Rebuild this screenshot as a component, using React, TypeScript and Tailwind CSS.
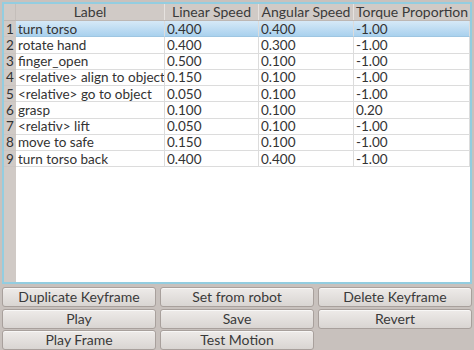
const rows = [
  ['turn torso', '0.400', '0.400', '-1.00'],
  ['rotate hand', '0.400', '0.300', '-1.00'],
  ['finger_open', '0.500', '0.100', '-1.00'],
  ['<relative> align to object', '0.150', '0.100', '-1.00'],
  ['<relative> go to object', '0.050', '0.100', '-1.00'],
  ['grasp', '0.100', '0.100', '0.20'],
  ['<relativ> lift', '0.050', '0.100', '-1.00'],
  ['move to safe', '0.150', '0.100', '-1.00'],
  ['turn torso back', '0.400', '0.400', '-1.00'],
]

const cols = 'grid grid-cols-[12px_149px_94px_95px_1fr]'

function Btn({ label }: { label: string }) {
  return (
    <button className="h-[20px] rounded-[3px] border border-[#a8a09c] bg-gradient-to-b from-[#eeebe9] to-[#d9d5d2] text-[14px] text-[#3a3a3a] leading-none shadow-[inset_0_1px_0_#f8f7f6]">
      {label}
    </button>
  )
}

export default function App() {
  return (
    <div
      className="w-[474px] h-[350px] bg-[#c8c1bd] p-[2px] flex flex-col gap-[3px] text-[#333]"
      style={{ fontFamily: 'Lato, "Noto Sans", sans-serif' }}
    >
      {/* Table */}
      <div className="h-[282px] shrink-0 border-2 border-[#93cde0] bg-white flex flex-col overflow-hidden">
        <div className={`${cols} h-[17px] bg-[#d0cac6] border-b border-[#bdb7b3] text-[14px] leading-[16px] text-[#3a3a3a]`}>
          <div className="border-r border-[#c4beba]" />
          <div className="text-center border-r border-[#e6e2df]">Label</div>
          <div className="text-center border-r border-[#e6e2df]">Linear Speed</div>
          <div className="text-center border-r border-[#e6e2df]">Angular Speed</div>
          <div className="text-center whitespace-nowrap">Torque Proportion</div>
        </div>
        <div className="flex-1 flex flex-col">
          {rows.map((r, i) => {
            const sel = i === 0
            return (
              <div key={i} className={`${cols} h-[16.25px] text-[13.5px] leading-[14px]`}>
                <div className="bg-[#d0cac6] border-b border-[#cbc5c1] flex items-center justify-center">{i + 1}</div>
                {r.map((c, j) => (
                  <div
                    key={j}
                    className={`pl-[2px] whitespace-nowrap overflow-hidden flex items-center border-b border-r border-[#dcdcdc] ${
                      sel ? 'bg-gradient-to-b from-[#d6e9f7] to-[#a9d1ee] border-b-[#9ec6e2]' : ''
                    }`}
                  >
                    {c}
                  </div>
                ))}
              </div>
            )
          })}
          <div className="flex-1 flex">
            <div className="w-[12px] bg-[#d0cac6]" />
            <div className="flex-1" />
          </div>
        </div>
      </div>

      {/* Buttons */}
      <div className="grid grid-cols-3 gap-x-[4px] gap-y-[1.5px]">
        <Btn label="Duplicate Keyframe" />
        <Btn label="Set from robot" />
        <Btn label="Delete Keyframe" />
        <Btn label="Play" />
        <Btn label="Save" />
        <Btn label="Revert" />
        <Btn label="Play Frame" />
        <Btn label="Test Motion" />
      </div>
    </div>
  )
}
